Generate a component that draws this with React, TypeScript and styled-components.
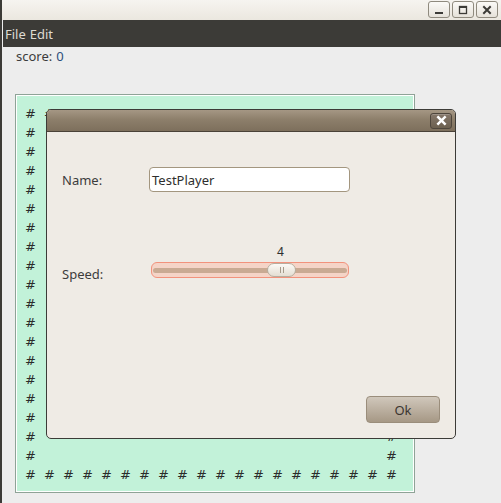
import React from 'react';
import styled, { createGlobalStyle } from 'styled-components';

const GlobalStyle = createGlobalStyle`
  html, body {
    margin: 0;
    padding: 0;
    background: #ededed;
  }
  body {
    font-family: "Noto Sans", "DejaVu Sans", sans-serif;
    font-size: 13px;
    color: #333;
  }
`;

const GRID = 20;

// 窗口外框
const Frame = styled.div`
  position: relative;
  width: 501px;
  height: 503px;
  box-sizing: border-box;
  border-left: 2px solid #3c3b37;
  background: #ededed;
  overflow: hidden;
  display: flex;
  flex-direction: column;
`;

const TitleBar = styled.div`
  height: 20px;
  background: linear-gradient(#f6f4f0, #ebe7df);
  display: flex;
  justify-content: flex-end;
  align-items: flex-start;
  gap: 2px;
  padding: 1px 3px 0 0;
  box-sizing: border-box;
`;

const WinButton = styled.div`
  width: 22px;
  height: 17px;
  box-sizing: border-box;
  border: 1px solid #8f8a7e;
  border-radius: 3px;
  background: linear-gradient(#fbfaf7, #e6e2da);
  display: flex;
  align-items: center;
  justify-content: center;
  color: #3c3b37;
`;

const MenuBar = styled.div`
  height: 27px;
  margin-left: 1px;
  background: #3c3b37;
  display: flex;
  align-items: center;
  gap: 4px;
  padding-left: 2px;
`;

const MenuItem = styled.span`
  color: #dfdbd2;
  font-size: 13px;
`;

const ScoreLine = styled.div`
  height: 18px;
  padding-left: 14px;
  display: flex;
  align-items: center;
  font-size: 13px;
  color: #3c3c3c;
`;

const ScoreValue = styled.span`
  color: #2c4f7c;
  margin-left: 4px;
`;

const Board = styled.div`
  margin: 29px 0 0 13px;
  width: 400px;
  height: 399px;
  box-sizing: border-box;
  border: 1px solid #8fa397;
  box-shadow: inset 0 0 0 1px #ffffff;
  background: #c2f2d9;
  padding: 9px 0 0 5px;
`;

const Cells = styled.div`
  display: grid;
  grid-template-columns: repeat(${GRID}, 19px);
  grid-auto-rows: 19px;
`;

const Cell = styled.span`
  display: flex;
  align-items: center;
  justify-content: center;
  font-family: "DejaVu Sans", sans-serif;
  font-size: 13px;
  color: #2b2b2b;
`;

// 对话框
const Dialog = styled.div`
  position: absolute;
  left: 44px;
  top: 109px;
  width: 410px;
  height: 330px;
  box-sizing: border-box;
  border: 1px solid #3c3b37;
  border-radius: 5px;
  background: #efebe5;
  overflow: hidden;
  display: flex;
  flex-direction: column;
`;

const DialogTitle = styled.div`
  height: 21px;
  flex-shrink: 0;
  background: linear-gradient(#a59784 0%, #8d7f6b 45%, #7d6f5c 100%);
  border-bottom: 1px solid #4a4238;
  display: flex;
  justify-content: flex-end;
  align-items: center;
  padding-right: 3px;
`;

const CloseBox = styled.div`
  width: 22px;
  height: 16px;
  box-sizing: border-box;
  border: 1px solid #4e463c;
  border-radius: 3px;
  background: linear-gradient(#85776a, #6c604f);
  box-shadow: inset 0 1px 0 rgba(255, 255, 255, 0.2);
  display: flex;
  align-items: center;
  justify-content: center;
`;

const DialogBody = styled.div`
  flex: 1;
  display: flex;
  flex-direction: column;
  padding: 35px 15px 15px 15px;
`;

const Row = styled.div`
  display: flex;
  align-items: center;
`;

const Label = styled.span`
  width: 87px;
  font-size: 13px;
  color: #3c3c3c;
`;

const TextField = styled.div`
  width: 201px;
  height: 25px;
  box-sizing: border-box;
  border: 1px solid #a3967f;
  border-radius: 4px;
  background: #ffffff;
  display: flex;
  align-items: center;
  padding-left: 2px;
  font-size: 13px;
  color: #2e2e2e;
`;

const SpeedRow = styled(Row)`
  margin-top: 52px;
  align-items: flex-end;
`;

const SpeedLabel = styled(Label)`
  margin-bottom: -4px;
  line-height: 16px;
`;

const SliderBlock = styled.div`
  margin-left: 2px;
  display: flex;
  flex-direction: column;
  align-items: stretch;
`;

const SliderValue = styled.div`
  height: 16px;
  margin-bottom: 2px;
  padding-left: 126px;
  font-size: 12px;
  line-height: 16px;
  color: #2e2e2e;
`;

const SliderTrough = styled.div`
  position: relative;
  width: 198px;
  height: 16px;
  box-sizing: border-box;
  border: 1px solid #f2927c;
  border-radius: 6px;
  background: #f5d4c7;
  display: flex;
  align-items: center;
  padding: 0 1px;
`;

const SliderTrack = styled.div`
  flex: 1;
  height: 5px;
  border-radius: 3px;
  background: #c9aa93;
`;

const Thumb = styled.div`
  position: absolute;
  top: 0px;
  width: 29px;
  height: 14px;
  box-sizing: border-box;
  border: 1px solid #b8ae9f;
  border-radius: 7px;
  background: linear-gradient(#fbfaf6, #e4ded3);
  display: flex;
  align-items: center;
  justify-content: center;
  gap: 2px;
`;

const Grip = styled.span`
  width: 1px;
  height: 6px;
  background: #a59a8a;
`;

const Footer = styled.div`
  margin-top: auto;
  display: flex;
  justify-content: flex-end;
`;

const OkButton = styled.div`
  width: 74px;
  height: 27px;
  box-sizing: border-box;
  border: 1px solid #9a8d7b;
  border-radius: 4px;
  background: linear-gradient(#d0c7bb, #a69885);
  display: flex;
  align-items: center;
  justify-content: center;
  font-size: 13px;
  color: #3a3530;
`;

const XIcon: React.FC<{ size: number; color: string; weight: number }> = ({ size, color, weight }) => (
  <svg width={size} height={size} viewBox="0 0 10 10">
    <path d="M2 2 L8 8 M8 2 L2 8" stroke={color} strokeWidth={weight} strokeLinecap="square" />
  </svg>
);

const App: React.FC = () => {
  const speed = 4;
  const min = 0;
  const max = 10;
  const thumbLeft = 115 * ((speed - min) / (max - min)) / 0.4;

  const cells = [];
  for (let r = 0; r < GRID; r++) {
    for (let c = 0; c < GRID; c++) {
      const edge = r === 0 || c === 0 || r === GRID - 1 || c === GRID - 1;
      cells.push(<Cell key={`${r}-${c}`}>{edge ? '#' : ''}</Cell>);
    }
  }

  return (
    <>
      <GlobalStyle />
      <Frame>
        <TitleBar>
          <WinButton>
            <svg width="10" height="10" viewBox="0 0 10 10">
              <rect x="1" y="7" width="8" height="2" fill="#3c3b37" />
            </svg>
          </WinButton>
          <WinButton>
            <svg width="10" height="10" viewBox="0 0 10 10">
              <rect x="1.5" y="1.5" width="7" height="7" fill="none" stroke="#3c3b37" strokeWidth="1.3" />
              <rect x="1" y="1" width="8" height="2" fill="#3c3b37" />
            </svg>
          </WinButton>
          <WinButton>
            <XIcon size={10} color="#3c3b37" weight={2} />
          </WinButton>
        </TitleBar>
        <MenuBar>
          <MenuItem>File</MenuItem>
          <MenuItem>Edit</MenuItem>
        </MenuBar>
        <ScoreLine>
          score:<ScoreValue>0</ScoreValue>
        </ScoreLine>
        <Board>
          <Cells>{cells}</Cells>
        </Board>

        <Dialog>
          <DialogTitle>
            <CloseBox>
              <XIcon size={11} color="#ffffff" weight={2.2} />
            </CloseBox>
          </DialogTitle>
          <DialogBody>
            <Row>
              <Label>Name:</Label>
              <TextField>TestPlayer</TextField>
            </Row>
            <SpeedRow>
              <SpeedLabel>Speed:</SpeedLabel>
              <SliderBlock>
                <SliderValue>{speed}</SliderValue>
                <SliderTrough>
                  <SliderTrack />
                  <Thumb style={{ left: thumbLeft }}>
                    <Grip />
                    <Grip />
                  </Thumb>
                </SliderTrough>
              </SliderBlock>
            </SpeedRow>
            <Footer>
              <OkButton>Ok</OkButton>
            </Footer>
          </DialogBody>
        </Dialog>
      </Frame>
    </>
  );
};

export default App;
